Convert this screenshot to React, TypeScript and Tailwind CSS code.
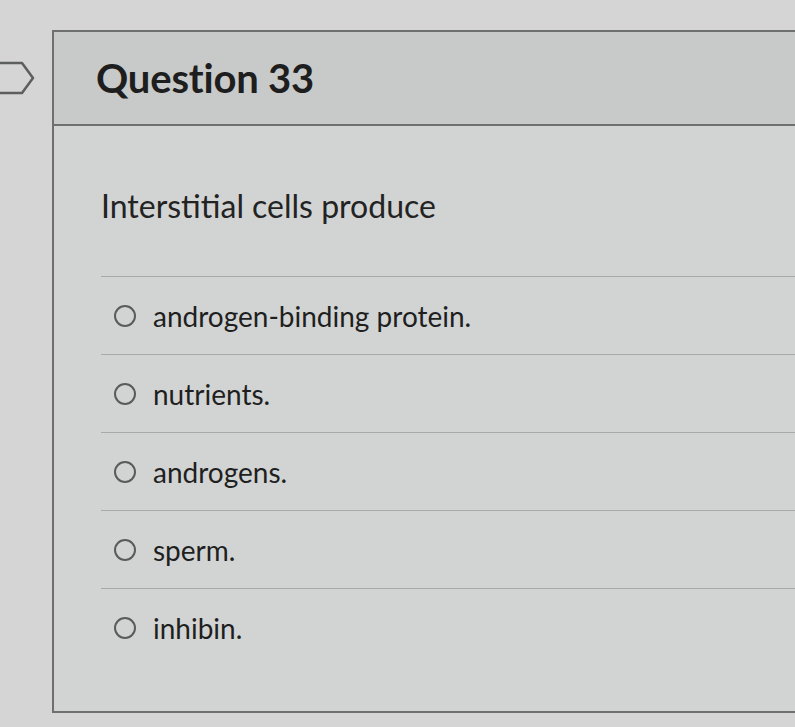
import React from 'react';

const answers = ['androgen-binding protein.', 'nutrients.', 'androgens.', 'sperm.', 'inhibin.'];

function BookmarkTag() {
  return (
    <svg width="36" height="34" viewBox="0 0 36 34" className="mt-[61px]">
      <path d="M-2 2 H22 L33 17 L22 32 H-2" fill="none" stroke="#5c5f5e" strokeWidth="2.5" strokeLinejoin="round" />
    </svg>
  );
}

export default function App() {
  return (
    <div
      className="w-[795px] h-[727px] overflow-hidden bg-[#d4d5d4] flex"
      style={{ fontFamily: 'Lato, "Noto Sans", sans-serif' }}
    >
      <div className="w-[52px] shrink-0">
        <BookmarkTag />
      </div>
      <div className="flex-1 pt-[30px]">
        <div className="h-[683px] border-l-2 border-t-2 border-b-2 border-[#6e706f] bg-[#d2d4d3] flex flex-col">
          <div className="h-[94px] shrink-0 bg-[#c8cac9] border-b-2 border-[#6e706f] flex items-center pl-[42px]">
            <h2 className="text-[40px] font-bold text-[#1e1e1e] tracking-[-0.2px]">Question 33</h2>
          </div>
          <div className="pl-[47px]">
            <p className="pt-[60px] h-[150px] text-[32px] leading-[40px] text-[#232323]">Interstitial cells produce</p>
            <ul>
              {answers.map((a) => (
                <li
                  key={a}
                  className="h-[78px] flex items-center gap-[17px] pl-[13px] border-t border-[#a8aaa9]"
                >
                  <span className="w-[22px] h-[22px] rounded-full border-2 border-[#5a5c5b] shrink-0" />
                  <span className="text-[28px] text-[#1f1f1f]">{a}</span>
                </li>
              ))}
            </ul>
          </div>
        </div>
      </div>
    </div>
  );
}
